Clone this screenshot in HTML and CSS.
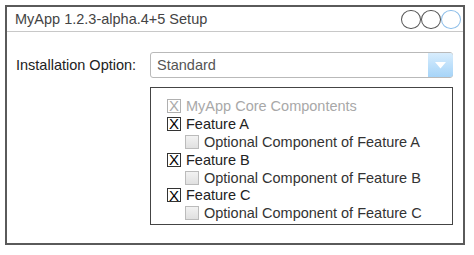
FILE: index.html
```html
<!DOCTYPE html>
<html>
<head>
<meta charset="utf-8">
<link rel="stylesheet" href="styles.css">
</head>
<body>
<div class="window">
  <div class="titlebar">
    <span class="title">MyApp 1.2.3-alpha.4+5 Setup</span>
    <div class="controls">
      <span class="circle"></span>
      <span class="circle"></span>
      <span class="circle blue"></span>
    </div>
  </div>
  <div class="content">
    <div class="label">Installation Option:</div>
    <div class="select">
      <span class="select-text">Standard</span>
      <span class="select-btn"><svg width="11" height="7" viewBox="0 0 11 7"><path d="M0 0 L11 0 L5.5 6.5 Z" fill="#fff"/></svg></span>
    </div>
    <div class="group">
      <div class="item disabled"><span class="box checked disabled-box">X</span>MyApp Core Compontents</div>
      <div class="item"><span class="box checked">X</span>Feature A</div>
      <div class="item sub"><span class="box"></span>Optional Component of Feature A</div>
      <div class="item"><span class="box checked">X</span>Feature B</div>
      <div class="item sub"><span class="box"></span>Optional Component of Feature B</div>
      <div class="item"><span class="box checked">X</span>Feature C</div>
      <div class="item sub"><span class="box"></span>Optional Component of Feature C</div>
    </div>
  </div>
</div>
</body>
</html>
```
FILE: styles.css
```css
html, body {
  margin: 0;
  padding: 0;
  background: #fff;
}
body {
  font-family: "Liberation Sans", Arial, sans-serif;
  width: 474px;
  height: 255px;
  overflow: hidden;
}
.window {
  margin: 5px 0 0 5px;
  width: 456px;
  height: 236px;
  border: 2px solid #5a5a5a;
  display: flex;
  flex-direction: column;
}
.titlebar {
  height: 24px;
  border-bottom: 1px solid #c8c8c8;
  display: flex;
  align-items: center;
  justify-content: space-between;
  padding-left: 8px;
  padding-right: 2px;
}
.title {
  font-size: 14.5px;
  color: #444;
}
.controls {
  display: flex;
  margin-top: 1px;
}
.circle {
  box-sizing: border-box;
  width: 20px;
  height: 19.5px;
  border: 1.25px solid #555;
  border-radius: 50%;
}
.circle.blue {
  border-color: #8cbde8;
}
.content {
  display: grid;
  grid-template-columns: 143px 303px;
  grid-template-rows: 26px auto;
  row-gap: 9px;
  padding-top: 20px;
}
.label {
  padding-left: 9px;
  font-size: 14.5px;
  color: #222;
  align-self: center;
}
.select {
  border: 1px solid #b9b9b9;
  border-radius: 3px;
  display: flex;
  align-items: center;
  justify-content: space-between;
  height: 24px;
}
.select-text {
  padding-left: 6px;
  font-size: 14.5px;
  color: #555;
}
.select-btn {
  width: 25px;
  height: 24px;
  background: linear-gradient(#d8edfd, #a6d4f8);
  border-radius: 0 3px 3px 0;
  display: flex;
  align-items: center;
  justify-content: center;
  margin-right: -1px;
}
.group {
  grid-column: 2;
  border: 1.5px solid #444;
  height: 138px;
  padding-top: 9px;
  padding-left: 16px;
  box-sizing: border-box;
}
.item {
  display: flex;
  align-items: center;
  height: 17.9px;
  font-size: 14.5px;
  color: #222;
}
.item.sub {
  padding-left: 18px;
  color: #333;
}
.item.disabled {
  color: #a8a8a8;
}
.box {
  width: 12px;
  height: 12px;
  border: 1px solid #bbb;
  background: linear-gradient(#f2f2f2, #e0e0e0);
  margin-right: 5px;
  box-sizing: content-box;
  display: flex;
  align-items: center;
  justify-content: center;
  font-size: 15px;
  line-height: 1;
  overflow: hidden;
}
.box.checked {
  border-color: #333;
  background: #fff;
  color: #000;
}
.box.disabled-box {
  border-color: #b0b0b0;
  color: #aaa;
}
```
